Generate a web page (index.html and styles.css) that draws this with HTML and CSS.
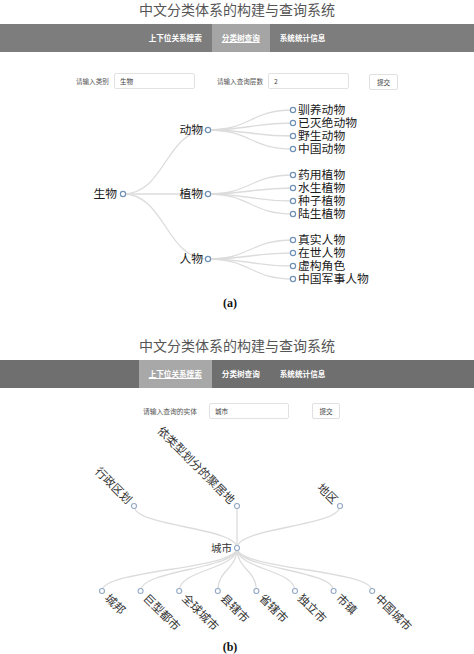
FILE: index.html
```html
<!DOCTYPE html>
<html lang="zh-CN">
<head>
<meta charset="utf-8">
<title>中文分类体系的构建与查询系统</title>
<link rel="stylesheet" href="styles.css">
</head>
<body>
<section class="fig fig-a">
  <h1 class="title">中文分类体系的构建与查询系统</h1>
  <nav class="nav">
    <a class="tab">上下位关系搜索</a>
    <a class="tab active">分类树查询</a>
    <a class="tab">系统统计信息</a>
  </nav>
  <form class="query query-a">
    <label class="lbl lbl-1">请输入类别</label>
    <input class="field" value="生物">
    <label class="lbl lbl-2">请输入查询层数</label>
    <input class="field" value="2">
    <button type="button" class="btn btn-a">提交</button>
  </form>
  <svg class="tree tree-a" width="474" height="200" viewBox="0 95 474 200">
    <g class="links">
      <path d="M123,194 C165.5,194 165.5,130 208,130"/>
      <path d="M123,194 C165.5,194 165.5,194 208,194"/>
      <path d="M123,194 C165.5,194 165.5,259 208,259"/>
      <path d="M208,130 C250.5,130 250.5,110 293,110"/>
      <path d="M208,130 C250.5,130 250.5,123 293,123"/>
      <path d="M208,130 C250.5,130 250.5,136 293,136"/>
      <path d="M208,130 C250.5,130 250.5,149 293,149"/>
      <path d="M208,194 C250.5,194 250.5,175 293,175"/>
      <path d="M208,194 C250.5,194 250.5,188 293,188"/>
      <path d="M208,194 C250.5,194 250.5,201 293,201"/>
      <path d="M208,194 C250.5,194 250.5,214 293,214"/>
      <path d="M208,259 C250.5,259 250.5,240 293,240"/>
      <path d="M208,259 C250.5,259 250.5,253 293,253"/>
      <path d="M208,259 C250.5,259 250.5,266 293,266"/>
      <path d="M208,259 C250.5,259 250.5,279 293,279"/>
    </g>
    <g class="nodes">
      <circle cx="123" cy="194" r="2.6"/>
      <circle cx="208" cy="130" r="2.6"/>
      <circle cx="208" cy="194" r="2.6"/>
      <circle cx="208" cy="259" r="2.6"/>
      <circle cx="293" cy="110" r="2.6"/>
      <circle cx="293" cy="123" r="2.6"/>
      <circle cx="293" cy="136" r="2.6"/>
      <circle cx="293" cy="149" r="2.6"/>
      <circle cx="293" cy="175" r="2.6"/>
      <circle cx="293" cy="188" r="2.6"/>
      <circle cx="293" cy="201" r="2.6"/>
      <circle cx="293" cy="214" r="2.6"/>
      <circle cx="293" cy="240" r="2.6"/>
      <circle cx="293" cy="253" r="2.6"/>
      <circle cx="293" cy="266" r="2.6"/>
      <circle cx="293" cy="279" r="2.6"/>
    </g>
    <g class="labels">
      <text class="end" x="117" y="194" dy=".36em">生物</text>
      <text class="end" x="203" y="130" dy=".36em">动物</text>
      <text class="end" x="203" y="194" dy=".36em">植物</text>
      <text class="end" x="203" y="259" dy=".36em">人物</text>
      <text x="298" y="110" dy=".36em">驯养动物</text>
      <text x="298" y="123" dy=".36em">已灭绝动物</text>
      <text x="298" y="136" dy=".36em">野生动物</text>
      <text x="298" y="149" dy=".36em">中国动物</text>
      <text x="298" y="175" dy=".36em">药用植物</text>
      <text x="298" y="188" dy=".36em">水生植物</text>
      <text x="298" y="201" dy=".36em">种子植物</text>
      <text x="298" y="214" dy=".36em">陆生植物</text>
      <text x="298" y="240" dy=".36em">真实人物</text>
      <text x="298" y="253" dy=".36em">在世人物</text>
      <text x="298" y="266" dy=".36em">虚构角色</text>
      <text x="298" y="279" dy=".36em">中国军事人物</text>
    </g>
  </svg>
  <div class="cap">(a)</div>
</section>

<section class="fig fig-b">
  <h1 class="title">中文分类体系的构建与查询系统</h1>
  <nav class="nav">
    <a class="tab active">上下位关系搜索</a>
    <a class="tab">分类树查询</a>
    <a class="tab">系统统计信息</a>
  </nav>
  <form class="query query-b">
    <label class="lbl lbl-3">请输入查询的实体</label>
    <input class="field field-b" value="城市">
    <button type="button" class="btn btn-b">提交</button>
  </form>
  <svg class="tree tree-b" width="474" height="220" viewBox="0 419 474 220">
    <g class="links">
      <path d="M237,548 C237,527 134,527 134,506"/>
      <path d="M237,548 C237,527 237,527 237,506"/>
      <path d="M237,548 C237,527 340,527 340,506"/>
      <path d="M237,548 C237,569.5 102,569.5 102,591"/>
      <path d="M237,548 C237,569.5 140.6,569.5 140.6,591"/>
      <path d="M237,548 C237,569.5 179.2,569.5 179.2,591"/>
      <path d="M237,548 C237,569.5 217.8,569.5 217.8,591"/>
      <path d="M237,548 C237,569.5 256.4,569.5 256.4,591"/>
      <path d="M237,548 C237,569.5 295,569.5 295,591"/>
      <path d="M237,548 C237,569.5 333.6,569.5 333.6,591"/>
      <path d="M237,548 C237,569.5 372.2,569.5 372.2,591"/>
    </g>
    <g class="nodes">
      <circle cx="134" cy="506" r="2.5"/>
      <circle cx="237" cy="506" r="2.5"/>
      <circle cx="340" cy="506" r="2.5"/>
      <circle cx="237" cy="548" r="2.5"/>
      <circle cx="102" cy="591" r="2.5"/>
      <circle cx="140.6" cy="591" r="2.5"/>
      <circle cx="179.2" cy="591" r="2.5"/>
      <circle cx="217.8" cy="591" r="2.5"/>
      <circle cx="256.4" cy="591" r="2.5"/>
      <circle cx="295" cy="591" r="2.5"/>
      <circle cx="333.6" cy="591" r="2.5"/>
      <circle cx="372.2" cy="591" r="2.5"/>
    </g>
    <g class="labels">
      <text class="end" transform="translate(134,506) rotate(45)" x="-6" dy=".36em">行政区划</text>
      <text class="end" transform="translate(237,506) rotate(45)" x="-6" dy=".36em">依类型划分的聚居地</text>
      <text class="end" transform="translate(340,506) rotate(45)" x="-6" dy=".36em">地区</text>
      <text class="end mid" x="232" y="548" dy=".36em">城市</text>
      <text transform="translate(102,591) rotate(45)" x="7" dy=".36em">城邦</text>
      <text transform="translate(140.6,591) rotate(45)" x="7" dy=".36em">巨型都市</text>
      <text transform="translate(179.2,591) rotate(45)" x="7" dy=".36em">全球城市</text>
      <text transform="translate(217.8,591) rotate(45)" x="7" dy=".36em">县辖市</text>
      <text transform="translate(256.4,591) rotate(45)" x="7" dy=".36em">省辖市</text>
      <text transform="translate(295,591) rotate(45)" x="7" dy=".36em">独立市</text>
      <text transform="translate(333.6,591) rotate(45)" x="7" dy=".36em">市镇</text>
      <text transform="translate(372.2,591) rotate(45)" x="7" dy=".36em">中国城市</text>
    </g>
  </svg>
  <div class="cap">(b)</div>
</section>
</body>
</html>
```

FILE: styles.css
```css
html, body {
  margin: 0;
  padding: 0;
  background: #fff;
}
body {
  width: 474px;
  height: 654px;
  overflow: hidden;
  font-family: "Noto Sans CJK SC", "Noto Sans", sans-serif;
}
.fig {
  display: flex;
  flex-direction: column;
}
.title {
  margin: 0;
  height: 18px;
  padding-bottom: 6px;
  line-height: 18px;
  font-size: 14px;
  font-weight: normal;
  color: #555;
  text-align: center;
  letter-spacing: 0;
}
.nav {
  height: 28px;
  display: flex;
  justify-content: center;
  background: #7d7d7d;
}
.tab {
  display: block;
  padding: 0 10px;
  line-height: 28px;
  font-size: 7.6px;
  font-weight: bold;
  color: #fff;
}
.tab.active {
  background: #a5a5a5;
  text-decoration: underline;
}
.fig-b .nav {
  background: #6f6f6f;
}
.fig-b .tab.active {
  background: #a8a8a8;
}
.query {
  margin: 21px 0 0;
  height: 16px;
  display: flex;
  justify-content: center;
  align-items: center;
}
.query-b {
  margin-top: 15px;
  padding-left: 9px;
}
.lbl {
  font-size: 6.6px;
  color: #555;
  white-space: nowrap;
}
.lbl-1, .lbl-2 {
  margin-right: 5px;
}
.lbl-3 {
  font-size: 6.75px;
  margin-right: 12px;
}
.field {
  box-sizing: border-box;
  width: 81px;
  height: 16px;
  margin: 0 22px 0 0;
  padding: 0 5px;
  border: 1px solid #e2e2e2;
  border-radius: 2px;
  font-family: "Noto Sans CJK SC", "Noto Sans", sans-serif;
  font-size: 6.6px;
  color: #444;
  background: #fff;
  outline: none;
}
.query-a .field + .btn {
  margin-left: -2px;
}
.field-b {
  width: 80px;
  margin-right: 23px;
}
.btn {
  box-sizing: border-box;
  width: 29px;
  height: 16px;
  padding: 0;
  border: 1px solid #e0e0e0;
  border-radius: 2px;
  background: #fff;
  font-family: "Noto Sans CJK SC", "Noto Sans", sans-serif;
  font-size: 6.6px;
  color: #444;
}
.btn-a {
  margin-top: 2px;
}
.btn-b {
  width: 28px;
}
.tree {
  display: block;
  margin-top: 6px;
}
.tree-b {
  margin-top: 0;
}
.links path {
  fill: none;
  stroke: #dcdcdc;
  stroke-width: 1.3;
}
.nodes circle {
  fill: #fff;
  stroke: #6f91b6;
  stroke-width: 1.2;
}
.tree-b .nodes circle {
  stroke: #93a9c4;
  stroke-width: 1.1;
}
.labels text {
  font-family: "Noto Sans CJK SC", "Noto Sans", sans-serif;
  font-size: 11.8px;
  fill: #1a1a1a;
}
.tree-b .labels text {
  font-size: 11.5px;
  fill: #333;
}
.tree-b .labels text.mid {
  font-size: 10.5px;
}
.labels text.end {
  text-anchor: end;
}
.cap {
  height: 16px;
  line-height: 16px;
  padding-right: 14px;
  text-align: center;
  font-family: "Liberation Serif", serif;
  font-weight: bold;
  font-size: 12px;
  color: #111;
}
.fig-b {
  margin-top: 25px;
}
```
